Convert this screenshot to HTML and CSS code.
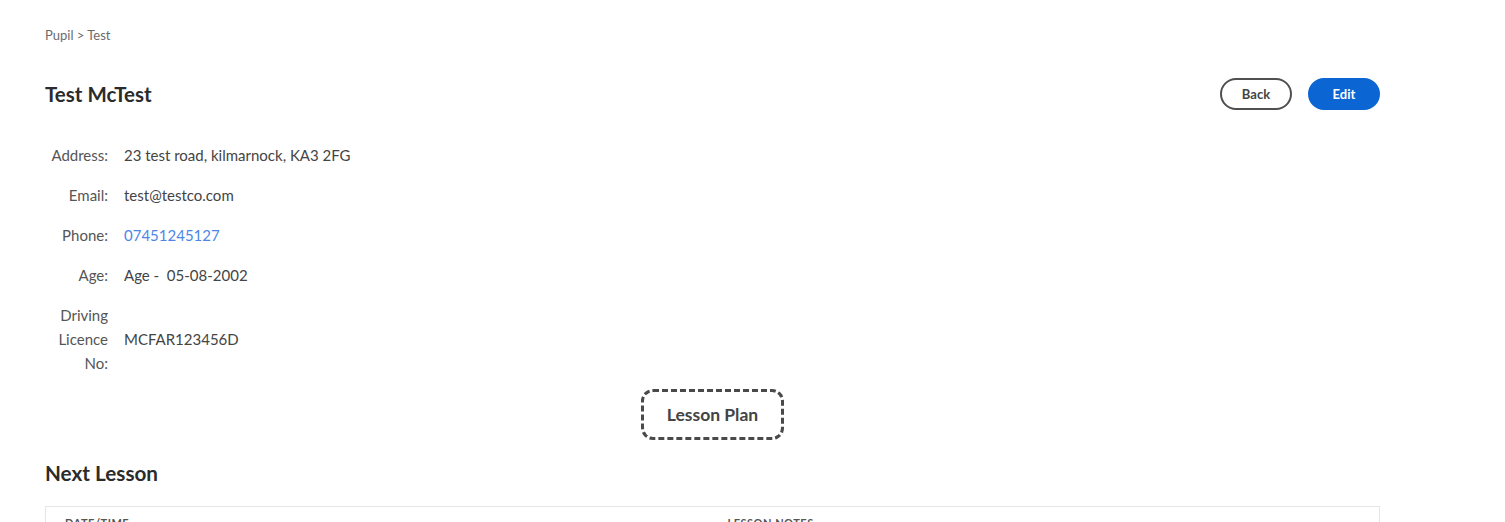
FILE: index.html
```html
<!DOCTYPE html>
<html lang="en">
<head>
<meta charset="utf-8">
<title>Pupil - Test McTest</title>
<link rel="stylesheet" href="styles.css">
</head>
<body>
<main class="page">
  <nav class="crumbs">Pupil &gt; Test</nav>
  <header class="head">
    <h1 class="title">Test McTest</h1>
    <div class="actions">
      <button class="btn btn-outline">Back</button>
      <button class="btn btn-primary">Edit</button>
    </div>
  </header>
  <dl class="details">
    <div class="row"><dt>Address:</dt><dd>23 test road, kilmarnock, KA3 2FG</dd></div>
    <div class="row"><dt>Email:</dt><dd>test@testco.com</dd></div>
    <div class="row"><dt>Phone:</dt><dd><a class="link" href="#">07451245127</a></dd></div>
    <div class="row"><dt>Age:</dt><dd>Age -&nbsp; 05-08-2002</dd></div>
    <div class="row"><dt>Driving Licence No:</dt><dd>MCFAR123456D</dd></div>
  </dl>
  <div class="plan-wrap"><button class="btn-plan">Lesson Plan</button></div>
  <h2 class="section-title">Next Lesson</h2>
  <div class="table-box">
    <div class="thead">
      <div class="th">DATE/TIME</div>
      <div class="th">LESSON NOTES</div>
    </div>
  </div>
</main>
</body>
</html>
```
FILE: styles.css
```css
* { box-sizing: border-box; }
html, body { margin: 0; padding: 0; background: #fff; }
body {
  font-family: Lato, "Liberation Sans", sans-serif;
  color: #444;
  font-size: 15px;
}
.page {
  width: 1335px;
  margin-left: 45px;
  padding-top: 27px;
}
.crumbs {
  font-size: 13px;
  color: #6b6b6b;
  line-height: 17px;
}
.head {
  display: flex;
  align-items: center;
  justify-content: space-between;
  margin-top: 34px;
  height: 32px;
}
.title {
  margin: 0;
  font-size: 20.5px;
  font-weight: 700;
  color: #2b2b2b;
  line-height: 28px;
}
.actions { display: flex; gap: 16px; }
.btn {
  width: 72px;
  height: 32px;
  border-radius: 16px;
  font-family: inherit;
  font-size: 13px;
  font-weight: 700;
  cursor: pointer;
}
.btn-outline {
  background: #fff;
  border: 2px solid #505050;
  color: #444;
}
.btn-primary {
  background: #0b66d3;
  border: 2px solid #0b66d3;
  color: #fff;
}
.details {
  margin: 25px 0 0 0;
  padding: 0;
}
.row {
  display: flex;
  gap: 16px;
  padding: 8px 0;
  line-height: 24px;
  align-items: center;
}
.row dt {
  width: 63px;
  text-align: right;
  color: #555;
  margin: 0;
}
.row dd { margin: 0; color: #444; }
.link { color: #4d86e6; text-decoration: none; }
.plan-wrap {
  display: flex;
  justify-content: center;
  margin-top: 6px;
}
.btn-plan {
  width: 143px;
  height: 51px;
  line-height: 24px;
  padding: 0;
  background: #fff;
  border: 3px dashed #4a4a4a;
  border-radius: 12px;
  font-family: inherit;
  font-size: 17.5px;
  font-weight: 700;
  color: #444;
}
.section-title {
  margin: 19px 0 0 0;
  font-size: 20.7px;
  font-weight: 700;
  color: #2b2b2b;
  line-height: 28px;
}
.table-box {
  margin-top: 19px;
  border: 1px solid #e6e6e6;
  border-bottom: none;
}
.thead {
  display: grid;
  grid-template-columns: 1fr 1fr;
  padding-top: 9px;
}
.th {
  padding-left: 19px;
  font-size: 11px;
  font-weight: 700;
  letter-spacing: 0.5px;
  color: #555;
  line-height: 14px;
}
.th + .th { padding-left: 15px; }
```
